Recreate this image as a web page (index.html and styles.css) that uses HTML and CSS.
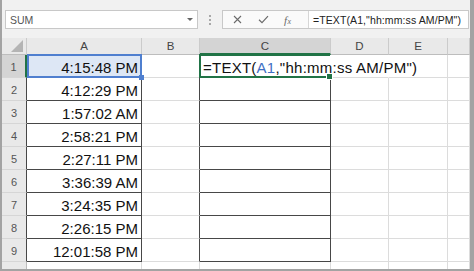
FILE: index.html
```html
<!DOCTYPE html>
<html>
<head>
<meta charset="utf-8">
<link rel="stylesheet" href="styles.css">
</head>
<body>
<div class="window">
  <div class="toolbar">
    <div class="namebox"><span>SUM</span><span class="dd"></span></div>
    <div class="grip"><i></i><i></i><i></i></div>
    <div class="fbar">
      <div class="fbtns">
        <span class="ic"><svg width="9" height="9" viewBox="0 0 9 9"><path d="M1 1L8 8M8 1L1 8" stroke="#6a6a6a" stroke-width="1.1" fill="none"/></svg></span>
        <span class="ic"><svg width="11" height="9" viewBox="0 0 11 9"><path d="M1 4.8L4 7.6L10 1.2" stroke="#6a6a6a" stroke-width="1.2" fill="none"/></svg></span>
        <span class="ic fx"><i>f</i><span>x</span></span>
      </div>
      <div class="ftext">=TEXT(A1,"hh:mm:ss AM/PM")</div>
    </div>
  </div>
  <div class="sheet">
    <div class="h corner"><svg width="12" height="12" viewBox="0 0 12 12"><path d="M12 0V12H0Z" fill="#b4b4b4"/></svg></div>
    <div class="h">A</div>
    <div class="h">B</div>
    <div class="h hc">C</div>
    <div class="h">D</div>
    <div class="h">E</div>
    <div class="h"></div>

    <div class="rh r1">1</div>
    <div class="c a sel">4:15:48 PM</div>
    <div class="c b"></div>
    <div class="c cc act">=TEXT(<span class="ref">A1</span>,"hh:mm:ss AM/PM")<span class="caret"></span></div>
    <div class="c d1"></div>
    <div class="c"></div>
    <div class="c"></div>

    <div class="rh dk">2</div>
    <div class="c a">4:12:29 PM</div>
    <div class="c b"></div>
    <div class="c cc"></div>
    <div class="c"></div>
    <div class="c"></div>
    <div class="c"></div>

    <div class="rh dk">3</div>
    <div class="c a">1:57:02 AM</div>
    <div class="c b"></div>
    <div class="c cc"></div>
    <div class="c"></div>
    <div class="c"></div>
    <div class="c"></div>

    <div class="rh dk">4</div>
    <div class="c a">2:58:21 PM</div>
    <div class="c b"></div>
    <div class="c cc"></div>
    <div class="c"></div>
    <div class="c"></div>
    <div class="c"></div>

    <div class="rh dk">5</div>
    <div class="c a">2:27:11 PM</div>
    <div class="c b"></div>
    <div class="c cc"></div>
    <div class="c"></div>
    <div class="c"></div>
    <div class="c"></div>

    <div class="rh dk">6</div>
    <div class="c a">3:36:39 AM</div>
    <div class="c b"></div>
    <div class="c cc"></div>
    <div class="c"></div>
    <div class="c"></div>
    <div class="c"></div>

    <div class="rh dk">7</div>
    <div class="c a">3:24:35 PM</div>
    <div class="c b"></div>
    <div class="c cc"></div>
    <div class="c"></div>
    <div class="c"></div>
    <div class="c"></div>

    <div class="rh dk">8</div>
    <div class="c a">2:26:15 PM</div>
    <div class="c b"></div>
    <div class="c cc"></div>
    <div class="c"></div>
    <div class="c"></div>
    <div class="c"></div>

    <div class="rh dk">9</div>
    <div class="c a">12:01:58 PM</div>
    <div class="c b"></div>
    <div class="c cc"></div>
    <div class="c"></div>
    <div class="c"></div>
    <div class="c"></div>

    <div class="rh last"></div>
    <div class="c last"></div>
    <div class="c last"></div>
    <div class="c last"></div>
    <div class="c last"></div>
    <div class="c last"></div>
    <div class="c last"></div>
  </div>
</div>
</body>
</html>
```
FILE: styles.css
```css
* { box-sizing: border-box; }
html, body { margin: 0; padding: 0; background: #fff; }
body { font-family: "Liberation Sans", Arial, sans-serif; }

.window {
  width: 474px;
  height: 271px;
  border-left: 2px solid #a3a3a3;
  border-right: 4px solid #a3a3a3;
  border-bottom: 2px solid #a3a3a3;
  background: #f1f1f1;
  display: flex;
  flex-direction: column;
  overflow: hidden;
}

.toolbar {
  height: 38px;
  flex: none;
  display: flex;
  align-items: flex-start;
  padding-top: 10px;
}
.namebox {
  margin-left: 3px;
  width: 193px;
  height: 19px;
  background: #fff;
  border: 1px solid #c8c8c8;
  display: flex;
  align-items: center;
  justify-content: space-between;
  padding: 0 4px;
  font-size: 10.5px;
  color: #555;
}
.dd {
  width: 0; height: 0;
  border-left: 3px solid transparent;
  border-right: 3px solid transparent;
  border-top: 3px solid #666;
}
.grip {
  margin-left: 8px;
  width: 8px;
  height: 19px;
  display: flex;
  flex-direction: column;
  align-items: center;
  justify-content: center;
  gap: 2px;
}
.grip i { width: 2px; height: 2px; background: #a8a8a8; }
.fbar {
  margin-left: 8px;
  margin-right: 1px;
  flex: 1;
  height: 19px;
  background: #fff;
  border: 1px solid #c8c8c8;
  display: flex;
  align-items: center;
}
.fbtns {
  width: 86px;
  height: 100%;
  display: flex;
  align-items: center;
  padding-left: 1px;
  border-right: 1px solid #d6d6d6;
  background: #fafafa;
}
.ic {
  width: 26px;
  height: 100%;
  display: flex;
  align-items: center;
  justify-content: center;
}
.fx {
  font-family: "Liberation Serif", serif;
  font-style: italic;
  color: #6a6a6a;
  font-size: 11px;
  justify-content: flex-start;
  padding-left: 8px;
}
.fx span { font-size: 8px; margin-top: 4px; margin-left: 0.5px; }
.ftext {
  padding-left: 4px;
  font-size: 10.5px;
  letter-spacing: 0.1px;
  color: #222;
  white-space: nowrap;
}

.sheet {
  flex: 1;
  display: grid;
  grid-template-columns: 25px 115px 58px 131px 58px 59px 1fr;
  grid-template-rows: 17px repeat(9, 23px) 1fr;
  background: #fff;
}
.h {
  background: #e9e9e9;
  border-right: 1px solid #cbcbcb;
  border-bottom: 1px solid #bdbdbd;
  font-size: 11.5px;
  color: #444;
  display: flex;
  align-items: center;
  justify-content: center;
}
.corner { align-items: flex-end; justify-content: flex-end; padding: 0 3px 2px 0; }
.hc { background: #d4d4d4; border-bottom: 2px solid #217346; }

.rh {
  background: #e9e9e9;
  border-right: 1px solid #bdbdbd;
  border-bottom: 1px solid #d6d6d6;
  font-size: 11px;
  color: #555;
  display: flex;
  align-items: center;
  justify-content: center;
  padding-top: 2px;
}
.rh.dk { border-right-color: #474747; }
.rh.r1 { background: #d4d4d4; border-right: 2px solid #217346; }
.rh.last { border-bottom: none; }

.c {
  border-right: 1px solid #dcdcdc;
  border-bottom: 1px solid #dcdcdc;
  font-size: 15px;
  line-height: 17px;
  color: #111;
  display: flex;
  align-items: flex-end;
  white-space: nowrap;
  padding: 0 3px 1px;
}
.c.last { border-bottom: none; }
.a { justify-content: flex-end; border-right-color: #474747; border-bottom-color: #474747; }
.b { border-right-color: #474747; }
.cc { border-right-color: #474747; border-bottom-color: #474747; }
.d1 { border-right-color: transparent; }

.sel { background: #dde7f5; position: relative; }
.sel::after {
  content: "";
  position: absolute;
  left: 0; top: -1px; right: -1px; bottom: -1px;
  border: 2px solid #4f7fcf;
}
.sel::before {
  content: "";
  position: absolute;
  right: -3px; bottom: -3px;
  width: 5px; height: 5px;
  background: #4f7fcf;
  z-index: 1;
}

.act { position: relative; border-right-color: transparent; letter-spacing: 0.25px; }
.act::after {
  content: "";
  position: absolute;
  left: -1px; top: -1px; right: 0; bottom: -1px;
  border: 2px solid #217346;
  border-right: none;
}
.act::before {
  content: "";
  position: absolute;
  right: -3px; bottom: -3px;
  width: 5px; height: 5px;
  background: #217346;
  border: 1px solid #fff;
  z-index: 1;
}
.ref { color: #3f6fc4; }
.caret {
  display: inline-block;
  width: 1px;
  height: 19px;
  background: #111;
  margin-left: 2px;
  margin-bottom: -1px;
}
```
